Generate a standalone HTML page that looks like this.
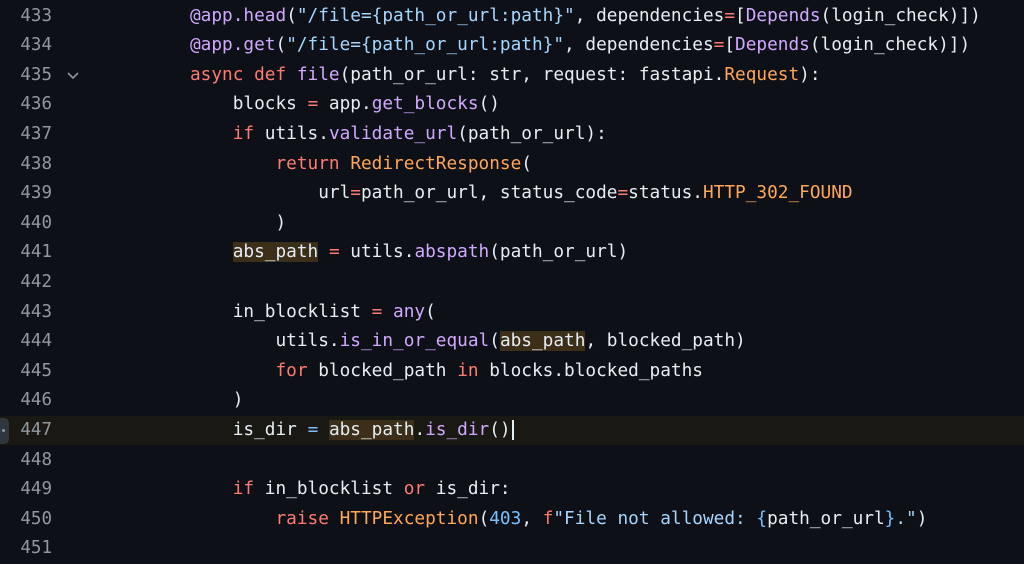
<!DOCTYPE html>
<html><head><meta charset="utf-8"><style>
body{margin:0;width:1024px;height:557px;background:#0d1117;overflow:hidden;font-family:"DejaVu Sans Mono","Liberation Mono",monospace;}
.l{position:absolute;left:0;width:1024px;height:29.6px;line-height:29.6px;font-size:17.75px;color:#e6edf3;white-space:pre;}
.n{position:absolute;left:0;width:52px;text-align:right;color:#9198a1;font-size:17.5px;}
.c{position:absolute;left:190px;}
.k{color:#ff7b72}.f{color:#d2a8ff}.s{color:#a5d6ff}.o{color:#ffa657}.b{color:#79c0ff}
.h{background:#3b2f1a}
</style></head><body>
<div class="l" style="top:1.5px"><span class="n">433</span><span class="c"><span class="f">@app.head</span>(<span class="s">"/file={path_or_url:path}"</span>, dependencies<span class="k">=</span>[<span class="f">Depends</span>(login_check)])</span></div>
<div class="l" style="top:31.1px"><span class="n">434</span><span class="c"><span class="f">@app.get</span>(<span class="s">"/file={path_or_url:path}"</span>, dependencies<span class="k">=</span>[<span class="f">Depends</span>(login_check)])</span></div>
<div class="l" style="top:60.7px"><span class="n">435</span><svg style="position:absolute;left:66px;top:10px" width="14" height="10" viewBox="0 0 14 10"><path d="M2 2 L7 7 L12 2" stroke="#8b949e" stroke-width="1.6" fill="none"/></svg><span class="c"><span class="k">async def</span> <span class="f">file</span>(path_or_url: str, request: fastapi.<span class="o">Request</span>):</span></div>
<div class="l" style="top:90.3px"><span class="n">436</span><span class="c">    blocks <span class="k">=</span> app.<span class="f">get_blocks</span>()</span></div>
<div class="l" style="top:119.9px"><span class="n">437</span><span class="c">    <span class="k">if</span> utils.<span class="f">validate_url</span>(path_or_url):</span></div>
<div class="l" style="top:149.5px"><span class="n">438</span><span class="c">        <span class="k">return</span> <span class="o">RedirectResponse</span>(</span></div>
<div class="l" style="top:179.1px"><span class="n">439</span><span class="c">            url<span class="k">=</span>path_or_url, status_code<span class="k">=</span>status.<span class="o">HTTP_302_FOUND</span></span></div>
<div class="l" style="top:208.7px"><span class="n">440</span><span class="c">        )</span></div>
<div class="l" style="top:238.3px"><span class="n">441</span><span class="c">    <span class="h">abs_path</span> <span class="k">=</span> utils.<span class="f">abspath</span>(path_or_url)</span></div>
<div class="l" style="top:267.9px"><span class="n">442</span></div>
<div class="l" style="top:297.5px"><span class="n">443</span><span class="c">    in_blocklist <span class="k">=</span> <span class="f">any</span>(</span></div>
<div class="l" style="top:327.1px"><span class="n">444</span><span class="c">        utils.<span class="f">is_in_or_equal</span>(<span class="h">abs_path</span>, blocked_path)</span></div>
<div class="l" style="top:356.7px"><span class="n">445</span><span class="c">        <span class="k">for</span> blocked_path <span class="k">in</span> blocks.blocked_paths</span></div>
<div class="l" style="top:386.3px"><span class="n">446</span><span class="c">    )</span></div>
<div class="l" style="top:415.9px;background:#1a1812"><span style="position:absolute;left:0;top:2px;width:9px;height:26px;background:#30363d;border-radius:0 5px 5px 0"></span><span style="position:absolute;left:2px;top:13px;width:3px;height:3px;background:#8b949e;border-radius:50%"></span><span class="n">447</span><span class="c">    is_dir <span class="b">=</span> <span class="h">abs_path</span>.<span class="f">is_dir</span>()<span style="border-left:2px solid #e6edf3;margin-left:1px"></span></span></div>
<div class="l" style="top:445.5px"><span class="n">448</span></div>
<div class="l" style="top:475.1px"><span class="n">449</span><span class="c">    <span class="k">if</span> in_blocklist <span class="k">or</span> is_dir:</span></div>
<div class="l" style="top:504.7px"><span class="n">450</span><span class="c">        <span class="k">raise</span> <span class="o">HTTPException</span>(<span class="b">403</span>, <span class="k">f</span><span class="s">"File not allowed: </span><span class="b">{</span>path_or_url<span class="b">}</span><span class="s">."</span>)</span></div>
<div class="l" style="top:534.3px"><span class="n">451</span></div>
</body></html>
